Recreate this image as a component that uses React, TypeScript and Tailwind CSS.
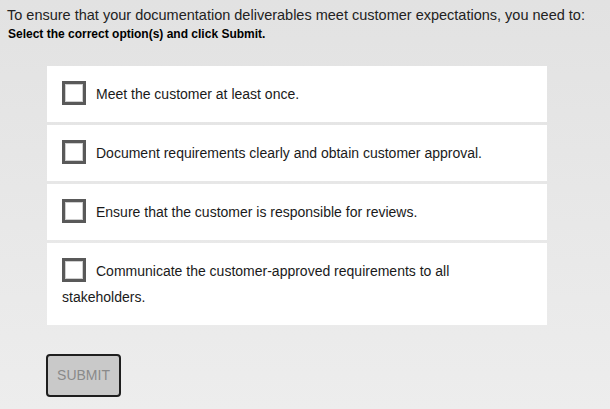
import React from "react";

const options = [
  "Meet the customer at least once.",
  "Document requirements clearly and obtain customer approval.",
  "Ensure that the customer is responsible for reviews.",
  "Communicate the customer-approved requirements to all stakeholders.",
];

export default function App() {
  return (
    <div
      className="w-full min-h-[409px] h-[409px] bg-gradient-to-b from-[#e2e2e2] to-[#ededed] text-[#1a1a1a] overflow-hidden"
      style={{ fontFamily: '"Liberation Sans", Arial, sans-serif' }}
    >
      <div className="pt-[5px] pl-[7px]">
        <p className="text-[14.5px] leading-[20px] text-[#222]">
          To ensure that your documentation deliverables meet customer expectations, you need to:
        </p>
        <p className="mt-[1px] pl-[1px] text-[12px] leading-[16px] font-bold text-black">
          Select the correct option(s) and click Submit.
        </p>
      </div>
      <div className="mt-[24px] pl-[47px] w-[547px] flex flex-col gap-[3px]">
        {options.map((o) => (
          <div key={o} className="bg-white px-[15px] py-[15px] text-[14px] leading-[26px]">
            <span className="inline-block align-top w-[24px] h-[24px] mr-[10px] border-[3px] border-[#595959] bg-white shadow-[inset_0_0_0_1px_#cfcfcf]" />
            {o}
          </div>
        ))}
      </div>
      <div className="pl-[46px] mt-[29px]">
        <button className="w-[75px] h-[43px] border-2 border-[#1e1e1e] rounded-[4px] bg-[#c9c9c9] text-[#8a8a8a] text-[14px] uppercase">
          Submit
        </button>
      </div>
    </div>
  );
}
